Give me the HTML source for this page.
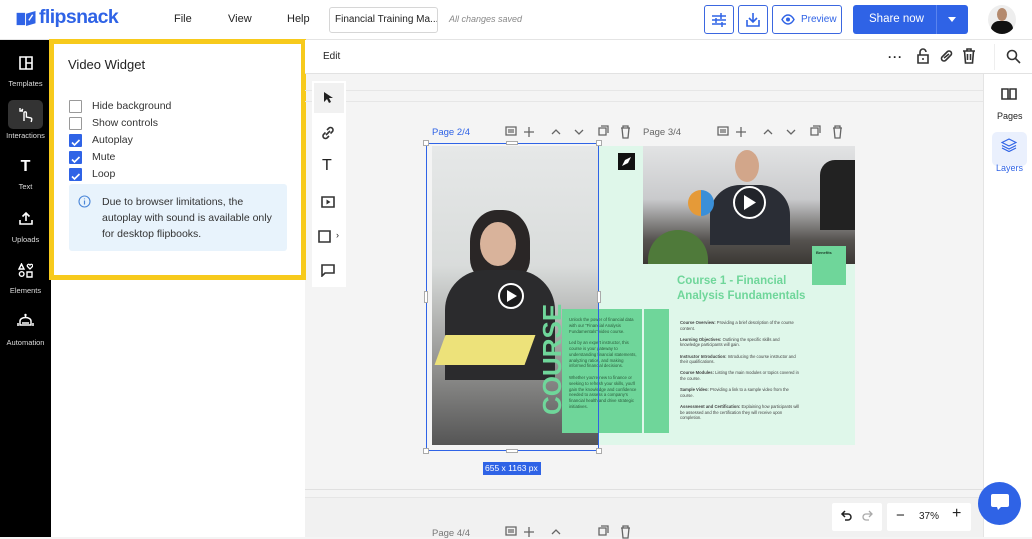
<!DOCTYPE html>
<html><head><meta charset="utf-8">
<style>
*{box-sizing:border-box;margin:0;padding:0}
body{width:1032px;height:537px;overflow:hidden;font-family:"Liberation Sans",sans-serif;background:#f4f4f4;position:relative;color:#222}
.abs{position:absolute}
.top{left:0;top:0;width:1032px;height:40px;background:#fff;border-bottom:1px solid #e4e4e4}
.menu{font-size:11px;color:#222;top:13px}
.btn{top:5px;height:29px;border:1px solid #3b67e0;border-radius:3px;background:#fff}
.side{left:0;top:40px;width:51px;height:497px;background:#000}
.si{width:51px;text-align:center;color:#ddd;font-size:7.5px}
.panel{left:51px;top:40px;width:254px;height:497px;background:#fff}
.ybox{left:49px;top:39px;width:257px;height:241px;border:5px solid #f7ca1c}
.cb{left:69px;width:13px;height:13px;border:1px solid #999;border-radius:1px;background:#fff}
.cb.on{background:#2f63e6;border-color:#2f63e6}
.lbl{left:92px;font-size:10.5px;color:#333;line-height:13px}
.ico{fill:none;stroke:#333;stroke-width:1.6}
.gi{fill:none;stroke:#666;stroke-width:1.3}
</style></head><body>
<div class="abs top"></div>
<svg class="abs" style="left:16px;top:10px" width="22" height="17" viewBox="0 0 22 18"><path d="M0 3h9v13H0z" fill="#2f63e6"/><path d="M10 4l10-3v13l-10 3z" fill="#2f63e6"/><path d="M13 11l4-6" stroke="#fff" stroke-width="1.5"/></svg>
<div class="abs" style="left:39px;top:6px;font-size:19.5px;font-weight:bold;color:#2f63e6;letter-spacing:-0.6px">flipsnack</div>
<div class="abs menu" style="left:174px">File</div>
<div class="abs menu" style="left:228px">View</div>
<div class="abs menu" style="left:287px">Help</div>
<div class="abs" style="left:329px;top:7px;width:109px;height:26px;border:1px solid #d6d6d6;border-radius:3px;font-size:10px;padding:6px 5px;white-space:nowrap;overflow:hidden">Financial Training Ma...</div>
<div class="abs" style="left:449px;top:14px;font-size:9px;font-style:italic;color:#888">All changes saved</div>
<div class="abs btn" style="left:704px;width:30px"><svg width="28" height="27" viewBox="0 0 28 27"><path d="M7 10h14M7 14h14M7 18h14M16 7v6M11 12v5M17 16v5" stroke="#2f63e6" stroke-width="1.5"/></svg></div>
<div class="abs btn" style="left:738px;width:30px"><svg width="28" height="27" viewBox="0 0 28 27"><path d="M14 7v9M10 12l4 4 4-4M8 14v6h12v-6" fill="none" stroke="#2f63e6" stroke-width="1.6"/></svg></div>
<div class="abs btn" style="left:772px;width:70px;color:#2f63e6;font-size:10px"><svg class="abs" style="left:8px;top:8px" width="14" height="11" viewBox="0 0 14 11"><path d="M1 5.5C3 2 5 1 7 1s4 1 6 4.5C11 9 9 10 7 10S3 9 1 5.5z" fill="none" stroke="#2f63e6" stroke-width="1.4"/><circle cx="7" cy="5.5" r="2" fill="#2f63e6"/></svg><span class="abs" style="left:28px;top:8px">Preview</span></div>
<div class="abs" style="left:853px;top:5px;width:115px;height:29px;background:#2f63e6;border-radius:3px;color:#fff;font-size:11.5px"><span class="abs" style="left:16px;top:8px">Share now</span><div class="abs" style="left:83px;top:0;width:1px;height:29px;background:#5a84ee"></div><div class="abs" style="left:95px;top:12px;border:4px solid transparent;border-top:5px solid #fff"></div></div>
<div class="abs" style="left:988px;top:5px;width:28px;height:29px;border-radius:50%;background:#eee;overflow:hidden"><div class="abs" style="left:9px;top:3px;width:10px;height:13px;border-radius:50%;background:#b48a6e"></div><div class="abs" style="left:3px;top:16px;width:22px;height:14px;border-radius:8px 8px 0 0;background:#111"></div></div>

<div class="abs side"></div>
<div class="abs si" style="left:0;top:56px"><svg width="14" height="14" viewBox="0 0 14 14"><path d="M1 1h12v12H1zM7 1v12M7 7h6" fill="none" stroke="#fff" stroke-width="1.6"/></svg><div style="margin-top:7px">Templates</div></div>
<div class="abs" style="left:8px;top:100px;width:35px;height:29px;background:#333;border-radius:5px"></div>
<div class="abs si" style="left:0;top:107px"><svg width="16" height="16" viewBox="0 0 16 16"><path d="M6 14V6a1.2 1.2 0 012.4 0v4l4 .8c1 .2 1.5 1 1.3 2l-.5 2.2M3 4l2-2M2 1v3h3" fill="none" stroke="#fff" stroke-width="1.4"/></svg><div style="margin-top:6px">Interactions</div></div>
<div class="abs si" style="left:0;top:159px"><div style="font-size:16px;font-weight:bold;color:#fff;line-height:16px">T</div><div style="margin-top:7px">Text</div></div>
<div class="abs si" style="left:0;top:211px"><svg width="14" height="14" viewBox="0 0 14 14"><path d="M7 10V2M3.5 5.5L7 2l3.5 3.5M1 9v4h12V9" fill="none" stroke="#fff" stroke-width="1.6"/></svg><div style="margin-top:8px">Uploads</div></div>
<div class="abs si" style="left:0;top:263px"><svg width="15" height="15" viewBox="0 0 15 15"><path d="M3.5 1L6 6H1z" fill="none" stroke="#fff" stroke-width="1.4"/><path d="M12 6l-2.5-2.5a1.4 1.4 0 012.5-1.5 1.4 1.4 0 012.5 1.5z" fill="none" stroke="#fff" stroke-width="1.3"/><circle cx="3.7" cy="11" r="2.3" fill="none" stroke="#fff" stroke-width="1.4"/><path d="M9 9h5v5H9z" fill="none" stroke="#fff" stroke-width="1.4"/></svg><div style="margin-top:6px">Elements</div></div>
<div class="abs si" style="left:0;top:313px"><svg width="17" height="17" viewBox="0 0 17 17"><circle cx="8.5" cy="2" r="1.2" fill="#fff"/><path d="M8.5 3v2M3 8a5.5 3.5 0 0111 0v4H3zM1 10v3M16 10v3M5 10h7" fill="none" stroke="#fff" stroke-width="1.5"/></svg><div style="margin-top:6px">Automation</div></div>

<div class="abs panel"></div>
<div class="abs ybox"></div>
<div class="abs" style="left:68px;top:57px;font-size:13px;color:#222">Video Widget</div>
<div class="abs cb" style="top:100px"></div><div class="abs lbl" style="top:100px">Hide background</div>
<div class="abs cb" style="top:117px"></div><div class="abs lbl" style="top:117px">Show controls</div>
<div class="abs cb on" style="top:134px"><svg width="11" height="11" viewBox="0 0 11 11"><path d="M2 5.5l2.5 2.5L9.5 3" fill="none" stroke="#fff" stroke-width="1.6"/></svg></div><div class="abs lbl" style="top:134px">Autoplay</div>
<div class="abs cb on" style="top:151px"><svg width="11" height="11" viewBox="0 0 11 11"><path d="M2 5.5l2.5 2.5L9.5 3" fill="none" stroke="#fff" stroke-width="1.6"/></svg></div><div class="abs lbl" style="top:151px">Mute</div>
<div class="abs cb on" style="top:168px"><svg width="11" height="11" viewBox="0 0 11 11"><path d="M2 5.5l2.5 2.5L9.5 3" fill="none" stroke="#fff" stroke-width="1.6"/></svg></div><div class="abs lbl" style="top:168px">Loop</div>
<div class="abs" style="left:69px;top:184px;width:218px;height:67px;background:#e8f3fc;border-radius:3px"></div>
<svg class="abs" style="left:78px;top:195px" width="13" height="13" viewBox="0 0 13 13"><circle cx="6.5" cy="6.5" r="5.5" fill="none" stroke="#4a86d8" stroke-width="1.1"/><path d="M6.5 5.5v4M6.5 3.5v.8" stroke="#4a86d8" stroke-width="1.2"/></svg>
<div class="abs" style="left:102px;top:194px;font-size:10.5px;line-height:16px;color:#333;width:172px">Due to browser limitations, the autoplay with sound is available only for desktop flipbooks.</div>

<div class="abs" style="left:305px;top:40px;width:727px;height:34px;background:#fff;border-bottom:1px solid #e2e2e2"></div>
<div class="abs" style="left:323px;top:51px;font-size:10px">Edit</div>
<div class="abs" style="left:888px;top:50px;font-size:12px;font-weight:bold;letter-spacing:1px">···</div>
<svg class="abs" style="left:916px;top:48px" width="14" height="16" viewBox="0 0 14 16"><path d="M2 7h10v8H2zM4 7V4a3 3 0 016 0" class="ico"/><circle cx="7" cy="11" r="1" fill="#333"/></svg>
<svg class="abs" style="left:938px;top:48px" width="17" height="16" viewBox="0 0 17 16"><path d="M7 6l-3 3a2.5 2.5 0 003.5 3.5l3-3M10 10l3-3a2.5 2.5 0 00-3.5-3.5l-3 3M6 10l5-4" class="ico"/></svg>
<svg class="abs" style="left:962px;top:48px" width="14" height="16" viewBox="0 0 14 16"><path d="M1 3h12M5 3V1h4v2M2.5 3l1 12h7l1-12M5.5 6v6M8.5 6v6" class="ico"/></svg>
<div class="abs" style="left:994px;top:44px;width:1px;height:26px;background:#eee"></div>
<svg class="abs" style="left:1006px;top:49px" width="15" height="15" viewBox="0 0 15 15"><circle cx="6" cy="6" r="4.5" class="ico"/><path d="M9.5 9.5L14 14" class="ico"/></svg>

<div class="abs" style="left:305px;top:90px;width:678px;height:1px;background:#e6e6e6"></div>
<div class="abs" style="left:305px;top:101px;width:678px;height:1px;background:#e6e6e6"></div>
<div class="abs" style="left:305px;top:489px;width:678px;height:1px;background:#e0e0e0"></div>
<div class="abs" style="left:305px;top:497px;width:678px;height:40px;background:#f1f1f1;border-top:1px solid #e6e6e6"></div>

<div class="abs" style="left:983px;top:74px;width:49px;height:463px;background:#fff;border-left:1px solid #e4e4e4"></div>
<svg class="abs" style="left:1001px;top:88px" width="16" height="13" viewBox="0 0 16 13"><path d="M1 1h6v10H1zM9 1h6v10H9zM7 11h2" class="ico"/></svg>
<div class="abs" style="left:997px;top:111px;font-size:9px">Pages</div>
<div class="abs" style="left:992px;top:132px;width:35px;height:34px;background:#eaf0fd;border-radius:5px"></div>
<svg class="abs" style="left:1001px;top:138px" width="16" height="14" viewBox="0 0 16 14"><path d="M8 1l7 3.5L8 8 1 4.5zM1 7.5L8 11l7-3.5M1 10l7 3.5 7-3.5" fill="none" stroke="#2f63e6" stroke-width="1.2"/></svg>
<div class="abs" style="left:996px;top:163px;font-size:9px;color:#2f63e6">Layers</div>

<div class="abs" style="left:312px;top:81px;width:34px;height:206px;background:#fff"></div>
<div class="abs" style="left:314px;top:83px;width:30px;height:30px;background:#f1f1f1"></div>
<svg class="abs" style="left:323px;top:91px" width="10" height="13" viewBox="0 0 10 13"><path d="M1 1v10l3-3 2 4 2-1-2-4h4z" fill="#222"/></svg>
<svg class="abs" style="left:321px;top:126px" width="14" height="14" viewBox="0 0 14 14"><path d="M6 4l2-2a2.5 2.5 0 013.5 3.5L9.5 7.5M8 10l-2 2A2.5 2.5 0 012.5 8.5L4.5 6.5M5 9l4-4" class="ico"/></svg>
<div class="abs" style="left:322px;top:157px;font-size:16px;color:#222">T</div>
<svg class="abs" style="left:321px;top:196px" width="14" height="12" viewBox="0 0 14 12"><path d="M1 1h12v10H1z" class="ico"/><path d="M5.5 3.5v5l4-2.5z" fill="#333"/></svg>
<svg class="abs" style="left:318px;top:230px" width="13" height="13" viewBox="0 0 13 13"><path d="M1 1h11v11H1z" class="ico"/></svg>
<div class="abs" style="left:336px;top:230px;font-size:9px">›</div>
<svg class="abs" style="left:321px;top:264px" width="14" height="13" viewBox="0 0 14 13"><path d="M1 1h12v8H4l-3 3z" class="ico"/></svg>

<div class="abs" style="left:432px;top:127px;font-size:9.5px;color:#2f63e6">Page 2/4</div>
<div class="abs" style="left:643px;top:127px;font-size:9.5px;color:#666">Page 3/4</div>
<svg class="abs" style="left:505px;top:125px" width="130" height="14" viewBox="0 0 130 14">
<path d="M1 2h10v8H1zM3 5h6M3 7h6" class="gi"/><path d="M24 2v10M19 7h10" class="gi"/><path d="M47 9l4-4 4 4" class="gi"/><path d="M70 5l4 4 4-4" class="gi"/><path d="M94 3h7v7h-7zM96 1h7v7" class="gi"/><path d="M116 3h9M118 3v-2h5v2M117 3l1 10h5l1-10" class="gi"/></svg>
<svg class="abs" style="left:717px;top:125px" width="130" height="14" viewBox="0 0 130 14">
<path d="M1 2h10v8H1zM3 5h6M3 7h6" class="gi"/><path d="M24 2v10M19 7h10" class="gi"/><path d="M47 9l4-4 4 4" class="gi"/><path d="M70 5l4 4 4-4" class="gi"/><path d="M94 3h7v7h-7zM96 1h7v7" class="gi"/><path d="M116 3h9M118 3v-2h5v2M117 3l1 10h5l1-10" class="gi"/></svg>

<div class="abs" style="left:432px;top:146px;width:423px;height:299px;background:#dff7ea"></div>
<div class="abs" style="left:432px;top:146px;width:166px;height:299px;background:linear-gradient(180deg,#e6e8e8 0%,#d9dcdb 40%,#9a9a98 70%,#555 100%)"></div>
<div class="abs" style="left:470px;top:210px;width:60px;height:70px;border-radius:45% 45% 30% 30%;background:#2a2626"></div>
<div class="abs" style="left:480px;top:222px;width:36px;height:44px;border-radius:50%;background:#d9b39b"></div>
<div class="abs" style="left:445px;top:270px;width:110px;height:110px;border-radius:40px 40px 0 0;background:#2b2b2d"></div>
<div class="abs" style="left:440px;top:335px;width:90px;height:30px;background:#ede27a;transform:skewX(-20deg)"></div>
<div class="abs" style="left:498px;top:283px;width:26px;height:26px;border-radius:50%;border:2px solid #fff;background:rgba(0,0,0,.35)"></div>
<svg class="abs" style="left:506px;top:289px" width="12" height="14"><path d="M1 1v12l10-6z" fill="#fff"/></svg>
<div class="abs" style="left:562px;top:309px;width:80px;height:124px;background:#6fd69a"></div>
<div class="abs" style="left:644px;top:309px;width:25px;height:124px;background:#6fd69a"></div>
<div class="abs" style="left:540px;top:300px;width:24px;height:115px;color:#6fd69a;font-weight:bold;font-size:26px;writing-mode:vertical-rl;transform:rotate(180deg);line-height:24px">COURSE 1</div>
<div class="abs" style="left:569px;top:317px;width:72px;font-size:4.3px;line-height:5.8px;color:#2a5a3a">Unlock the power of financial data with our "Financial Analysis Fundamentals" video course.<br><br>Led by an expert instructor, this course is your gateway to understanding financial statements, analyzing ratios, and making informed financial decisions.<br><br>Whether you're new to finance or seeking to refresh your skills, you'll gain the knowledge and confidence needed to assess a company's financial health and drive strategic initiatives.</div>
<div class="abs" style="left:618px;top:153px;width:17px;height:17px;background:#111"></div>
<svg class="abs" style="left:620px;top:155px" width="13" height="13"><path d="M2 11l3-6 6-3-3 6z" fill="#fff"/></svg>
<div class="abs" style="left:643px;top:146px;width:212px;height:118px;background:linear-gradient(180deg,#e2e3e4 0%,#c9cacc 45%,#55524f 80%,#3b3834 100%)"></div>
<div class="abs" style="left:710px;top:185px;width:80px;height:60px;border-radius:30px 30px 0 0;background:#2a2d35"></div>
<div class="abs" style="left:735px;top:150px;width:24px;height:32px;border-radius:50%;background:#d2a68a"></div>
<div class="abs" style="left:648px;top:230px;width:60px;height:34px;border-radius:30px 30px 0 0;background:#4f7a3a"></div>
<div class="abs" style="left:688px;top:190px;width:26px;height:26px;border-radius:50%;background:conic-gradient(#3a8fd8 0 50%,#e59a38 50% 100%)"></div>
<div class="abs" style="left:820px;top:160px;width:35px;height:70px;background:#222;border-radius:15px 0 0 0"></div>
<div class="abs" style="left:733px;top:186px;width:33px;height:33px;border-radius:50%;border:2px solid #fff;background:rgba(0,0,0,.2)"></div>
<svg class="abs" style="left:743px;top:194px" width="14" height="17"><path d="M1 1v15l12-7.5z" fill="#fff"/></svg>
<div class="abs" style="left:812px;top:246px;width:34px;height:39px;background:#6fd69a;font-size:4px;padding:4px;font-weight:bold;color:#1c3a28">Benefits</div>
<div class="abs" style="left:677px;top:274px;font-size:11.5px;line-height:14.5px;color:#6fd69a;font-weight:bold">Course 1 - Financial<br>Analysis Fundamentals</div>
<div class="abs" style="left:680px;top:320px;width:120px;font-size:4.2px;line-height:5.6px;color:#444"><b>Course Overview:</b> Providing a brief description of the course content.<br><br><b>Learning Objectives:</b> Outlining the specific skills and knowledge participants will gain.<br><br><b>Instructor Introduction:</b> Introducing the course instructor and their qualifications.<br><br><b>Course Modules:</b> Listing the main modules or topics covered in the course.<br><br><b>Sample Video:</b> Providing a link to a sample video from the course.<br><br><b>Assessment and Certification:</b> Explaining how participants will be assessed and the certification they will receive upon completion.</div>
<div class="abs" style="left:426px;top:143px;width:173px;height:308px;border:1.5px solid #2f63e6"></div>
<div class="abs" style="left:423px;top:140px;width:6px;height:6px;border:1px solid #aaa;background:#fff"></div>
<div class="abs" style="left:596px;top:140px;width:6px;height:6px;border:1px solid #aaa;background:#fff"></div>
<div class="abs" style="left:423px;top:448px;width:6px;height:6px;border:1px solid #aaa;background:#fff"></div>
<div class="abs" style="left:596px;top:448px;width:6px;height:6px;border:1px solid #aaa;background:#fff"></div>
<div class="abs" style="left:506px;top:141px;width:12px;height:4px;border:1px solid #aaa;background:#fff"></div>
<div class="abs" style="left:506px;top:449px;width:12px;height:4px;border:1px solid #aaa;background:#fff"></div>
<div class="abs" style="left:424px;top:291px;width:4px;height:12px;border:1px solid #aaa;background:#fff"></div>
<div class="abs" style="left:597px;top:291px;width:4px;height:12px;border:1px solid #aaa;background:#fff"></div>
<div class="abs" style="left:483px;top:462px;width:58px;height:13px;background:#2f63e6;color:#fff;font-size:8.5px;padding:1px 2px">655 x 1163 px</div>

<div class="abs" style="left:432px;top:528px;font-size:9.5px;color:#777">Page 4/4</div>
<svg class="abs" style="left:505px;top:525px" width="130" height="14" viewBox="0 0 130 14">
<path d="M1 2h10v8H1zM3 5h6M3 7h6" class="gi"/><path d="M24 2v10M19 7h10" class="gi"/><path d="M47 9l4-4 4 4" class="gi"/><path d="M94 3h7v7h-7zM96 1h7v7" class="gi"/><path d="M116 3h9M118 3v-2h5v2M117 3l1 10h5l1-10" class="gi"/></svg>

<div class="abs" style="left:832px;top:503px;width:50px;height:28px;background:#fff;border-radius:2px"></div>
<svg class="abs" style="left:840px;top:510px" width="34" height="14" viewBox="0 0 34 14"><path d="M3 4h5a3 3 0 010 6H5M5 1L2 4l3 3" fill="none" stroke="#222" stroke-width="1.5"/><path d="M31 4h-5a3 3 0 000 6h3M29 1l3 3-3 3" fill="none" stroke="#aaa" stroke-width="1.3"/></svg>
<div class="abs" style="left:887px;top:503px;width:84px;height:28px;background:#fff;border-radius:2px"></div>
<div class="abs" style="left:896px;top:507px;font-size:15px">−</div>
<div class="abs" style="left:919px;top:511px;font-size:10px">37%</div>
<div class="abs" style="left:952px;top:505px;font-size:16px">+</div>
<div class="abs" style="left:978px;top:482px;width:43px;height:43px;border-radius:50%;background:#2f63e6"></div>
<svg class="abs" style="left:988px;top:492px" width="23" height="22" viewBox="0 0 23 22"><path d="M5 2h14a2 2 0 012 2v9a2 2 0 01-2 2h-6l-3 3-1-3H5a2 2 0 01-2-2V4a2 2 0 012-2z" fill="#fff"/></svg>
</body></html>
